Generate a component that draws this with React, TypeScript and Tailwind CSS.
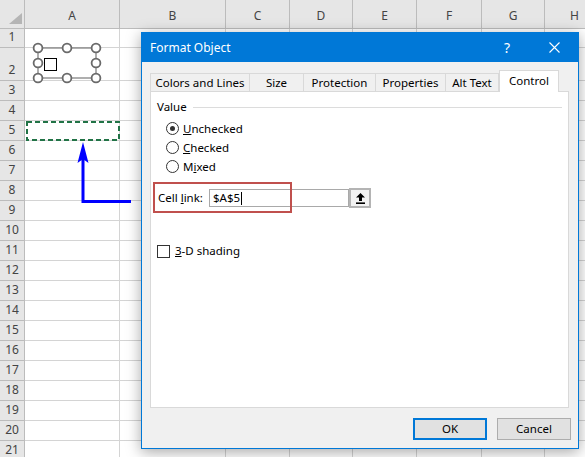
import React from "react";

const cols = [
  { label: "A", w: "w-[95px]" },
  { label: "B", w: "w-[106px]" },
  { label: "C", w: "w-[64px]" },
  { label: "D", w: "w-[63px]" },
  { label: "E", w: "w-[64px]" },
  { label: "F", w: "w-[65px]" },
  { label: "G", w: "w-[63px]" },
  { label: "H", w: "w-[60px]" },
];

const rows = Array.from({ length: 21 }, (_, i) => i + 1);

function rowHeight(n: number) {
  if (n === 1) return "h-[19px]";
  if (n === 2) return "h-[33px]";
  return "h-[20px]";
}

function Sheet() {
  return (
    <div className="flex flex-col">
      <div className="flex h-[29px]">
        <div className="flex h-full w-[25px] shrink-0 items-end justify-end border-r border-b border-[#bcbcbc] bg-[#e6e6e6] pr-[2px] pb-[4px]">
          <svg width="13" height="11" viewBox="0 0 13 11">
            <polygon points="13,0 13,11 0,11" fill="#b5b5b5" />
          </svg>
        </div>
        {cols.map((c) => (
          <div
            key={c.label}
            className={`${c.w} flex h-full shrink-0 items-end justify-center border-r border-b border-[#bcbcbc] bg-[#e6e6e6] pb-[3px] text-[12px] leading-[18px] text-[#444]`}
          >
            {c.label}
          </div>
        ))}
      </div>
      {rows.map((r) => (
        <div key={r} className={`flex ${rowHeight(r)}`}>
          <div className="flex h-full w-[25px] shrink-0 items-end justify-center border-r border-b border-[#bcbcbc] bg-[#e6e6e6] pb-[1px] text-[12px] leading-[18px] text-[#444]">
            {r}
          </div>
          {cols.map((c) => (
            <div
              key={c.label}
              className={`${c.w} h-full shrink-0 border-r border-b border-[#d4d4d4] bg-white`}
            />
          ))}
        </div>
      ))}
    </div>
  );
}

function SheetDrawings() {
  const handles = [
    [38, 48],
    [67, 48],
    [96, 48],
    [38, 63],
    [96, 63],
    [38, 78],
    [67, 78],
    [96, 78],
  ];
  return (
    <svg
      className="pointer-events-none absolute top-0 left-0"
      width="585"
      height="457"
      viewBox="0 0 585 457"
    >
      <rect x="38" y="48" width="58" height="30" fill="none" stroke="#7a7a7a" strokeWidth="1.2" />
      <rect x="44.5" y="58.5" width="12" height="12" fill="#fff" stroke="#000" strokeWidth="1" />
      {handles.map(([x, y]) => (
        <circle key={`${x}-${y}`} cx={x} cy={y} r="4.4" fill="#fff" stroke="#6a6a6a" strokeWidth="1.8" />
      ))}
      <rect
        x="27"
        y="122"
        width="92"
        height="18"
        fill="none"
        stroke="#217346"
        strokeWidth="2"
        strokeDasharray="5 3"
      />
      <path d="M131 201.5 H83 V158" fill="none" stroke="#0000ff" strokeWidth="3" />
      <path d="M83 142 L88.5 163 L83 159 L77.5 163 Z" fill="#0000ff" />
    </svg>
  );
}

function Radio({ checked, children }: { checked?: boolean; children: React.ReactNode }) {
  return (
    <div className="flex h-[19px] items-center pl-[9px]">
      <span className="flex h-[13px] w-[13px] items-center justify-center rounded-full border border-[#333] bg-white">
        {checked && <span className="h-[5px] w-[5px] rounded-full bg-[#333]" />}
      </span>
      <span className="ml-[4px]">{children}</span>
    </div>
  );
}

const tabs = [
  { label: "Colors and Lines", w: "w-[100px]" },
  { label: "Size", w: "w-[54px]" },
  { label: "Protection", w: "w-[72px]" },
  { label: "Properties", w: "w-[70px]" },
  { label: "Alt Text", w: "w-[53px]" },
];

function Dialog() {
  return (
    <div className="absolute top-[32px] left-[141px] flex h-[417px] w-[438px] flex-col border border-[#0078d7] bg-[#f0f0f0] text-[11.5px] text-black shadow-[0_3px_14px_rgba(0,0,0,0.35)]">
      <div className="flex h-[29px] shrink-0 items-center bg-[#0078d7] pl-[8px] text-white">
        <span className="text-[12px]">Format Object</span>
        <span className="mr-[39px] ml-auto text-[14px]">?</span>
        <svg className="mr-[18px]" width="11" height="11" viewBox="0 0 11 11">
          <path d="M0.5 0.5 L10.5 10.5 M10.5 0.5 L0.5 10.5" stroke="#fff" strokeWidth="1.1" />
        </svg>
      </div>
      <div className="flex flex-1 flex-col pt-[8px] pl-[8px]">
        <div className="flex h-[21px] items-end">
          {tabs.map((t, i) => (
            <div
              key={t.label}
              className={`${t.w} flex h-[18px] items-center justify-center border-t border-r border-[#d9d9d9] ${i === 0 ? "border-l" : ""}`}
            >
              {t.label}
            </div>
          ))}
          <div className="relative z-10 -mb-px flex h-[22px] w-[60px] items-center justify-center border border-b-0 border-[#d9d9d9] bg-white pb-[2px]">
            Control
          </div>
        </div>
        <div className="relative mr-[9px] flex h-[317px] flex-col border border-[#d9d9d9] bg-white pt-[7px] pl-[6px]">
          <div className="flex h-[16px] items-center">
            <span>Value</span>
            <span className="mr-[6px] ml-[6px] h-px flex-1 bg-[#dcdcdc]" />
          </div>
          <div className="mt-[4px] flex flex-col">
            <Radio checked>
              <u>U</u>nchecked
            </Radio>
            <Radio>
              <u>C</u>hecked
            </Radio>
            <Radio>
              M<u>i</u>xed
            </Radio>
          </div>
          <div className="mt-[12px] flex h-[20px] items-center">
            <span className="w-[52px] pl-[1px]">
              Cell <u>l</u>ink:
            </span>
            <div className="flex h-[18px] w-[140px] items-center border border-[#a9a9a9] pl-[3px]">
              <span>$A$5</span>
              <span className="ml-px h-[13px] w-px bg-black" />
            </div>
            <div className="flex h-[20px] w-[22px] items-center justify-center border-2 border-[#b4b4b4] bg-[#f3f3f3]">
              <svg width="9" height="11" viewBox="0 0 9 11">
                <path d="M4.5 0 L9 4.5 H6 V8 H3 V4.5 H0 Z" fill="#000" />
                <rect x="0" y="9.4" width="9" height="1.6" fill="#000" />
              </svg>
            </div>
          </div>
          <div className="mt-[36px] flex h-[14px] items-center">
            <span className="h-[13px] w-[13px] border border-[#333] bg-white" />
            <span className="ml-[5px]">
              <u>3</u>-D shading
            </span>
          </div>
          <div className="absolute top-[90px] left-[2px] h-[31px] w-[139px] border-2 border-[#c0504d]" />
        </div>
        <div className="mt-[10px] flex justify-end gap-[10px] pr-[7px]">
          <button className="h-[22px] w-[74px] border-2 border-[#0078d7] bg-[#e1e1e1]">OK</button>
          <button className="h-[22px] w-[74px] border border-[#adadad] bg-[#e1e1e1]">Cancel</button>
        </div>
      </div>
    </div>
  );
}

export default function App() {
  return (
    <div className="relative h-[457px] w-[585px] overflow-hidden bg-white font-['Noto_Sans',sans-serif]">
      <Sheet />
      <SheetDrawings />
      <Dialog />
    </div>
  );
}
